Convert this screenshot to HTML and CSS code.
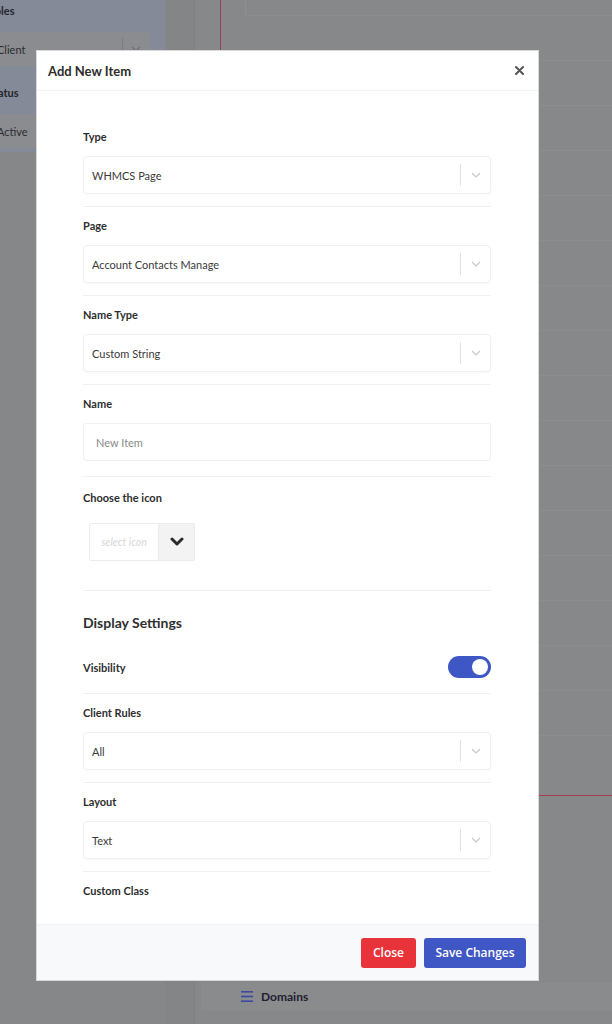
FILE: index.html
```html
<!DOCTYPE html>
<html>
<head>
<meta charset="utf-8">
<link rel="stylesheet" href="styles.css">
</head>
<body>
<div class="page">
  <aside class="sidebar">
    <div class="side-panel">
      <div class="side-label">Roles</div>
      <div class="side-select"><span class="side-text">Client</span><span class="side-ind"></span><svg class="side-chev" width="10" height="6" viewBox="0 0 10 6"><path d="M1 1l4 4 4-4" fill="none" stroke="#6f7074" stroke-width="1.2"/></svg></div>
      <div class="side-label">Status</div>
      <div class="side-select"><span class="side-text">Active</span></div>
    </div>
  </aside>
  <div class="gutter"></div>
  <main class="main">
    <div class="drop-zone">
      <div class="row row-first"></div>
      <div class="row"></div>
      <div class="row"></div>
      <div class="row"></div>
      <div class="row"></div>
      <div class="row"></div>
      <div class="row"></div>
      <div class="row"></div>
      <div class="row"></div>
      <div class="row"></div>
      <div class="row"></div>
      <div class="row"></div>
      <div class="row"></div>
      <div class="row"></div>
      <div class="row"></div>
      <div class="row"></div>
      <div class="row"></div>
    </div>
    <div class="domains">
      <svg class="ham" width="12" height="11" viewBox="0 0 12 11"><rect x="0" y="0" width="12" height="1.6" fill="#3b4aa0"/><rect x="0" y="4.7" width="12" height="1.6" fill="#3b4aa0"/><rect x="0" y="9.4" width="12" height="1.6" fill="#3b4aa0"/></svg>
      <span>Domains</span>
    </div>
  </main>
</div>

<div class="modal">
  <div class="modal-header">
    <h2 class="modal-title">Add New Item</h2>
    <svg class="modal-close" width="9" height="9" viewBox="0 0 9 9"><path d="M1 1l7 7M8 1l-7 7" stroke="#555" stroke-width="2" stroke-linecap="round"/></svg>
  </div>
  <div class="modal-body">
    <div class="field">
      <label class="label">Type</label>
      <div class="select"><span class="select-value">WHMCS Page</span><span class="select-sep"></span><span class="select-chev"><svg width="10" height="6" viewBox="0 0 10 6"><path d="M1 1l4 4 4-4" fill="none" stroke="#c8c8c8" stroke-width="1.2"/></svg></span></div>
    </div>
    <div class="field">
      <label class="label">Page</label>
      <div class="select"><span class="select-value">Account Contacts Manage</span><span class="select-sep"></span><span class="select-chev"><svg width="10" height="6" viewBox="0 0 10 6"><path d="M1 1l4 4 4-4" fill="none" stroke="#c8c8c8" stroke-width="1.2"/></svg></span></div>
    </div>
    <div class="field">
      <label class="label">Name Type</label>
      <div class="select"><span class="select-value">Custom String</span><span class="select-sep"></span><span class="select-chev"><svg width="10" height="6" viewBox="0 0 10 6"><path d="M1 1l4 4 4-4" fill="none" stroke="#c8c8c8" stroke-width="1.2"/></svg></span></div>
    </div>
    <div class="field field-name">
      <label class="label">Name</label>
      <div class="input"><span class="placeholder">New Item</span></div>
    </div>
    <div class="field field-icon">
      <label class="label label-icon">Choose the icon</label>
      <div class="icon-picker">
        <span class="icon-input">select icon</span>
        <span class="icon-btn"><svg width="14" height="10" viewBox="0 0 14 10"><path d="M2 2l5 5 5-5" fill="none" stroke="#2b2b2b" stroke-width="3" stroke-linecap="round" stroke-linejoin="round"/></svg></span>
      </div>
    </div>
    <h3 class="section-title">Display Settings</h3>
    <div class="field field-toggle">
      <label class="label">Visibility</label>
      <span class="toggle"><span class="knob"></span></span>
    </div>
    <div class="field">
      <label class="label">Client Rules</label>
      <div class="select"><span class="select-value">All</span><span class="select-sep"></span><span class="select-chev"><svg width="10" height="6" viewBox="0 0 10 6"><path d="M1 1l4 4 4-4" fill="none" stroke="#c8c8c8" stroke-width="1.2"/></svg></span></div>
    </div>
    <div class="field">
      <label class="label">Layout</label>
      <div class="select"><span class="select-value">Text</span><span class="select-sep"></span><span class="select-chev"><svg width="10" height="6" viewBox="0 0 10 6"><path d="M1 1l4 4 4-4" fill="none" stroke="#c8c8c8" stroke-width="1.2"/></svg></span></div>
    </div>
    <div class="field field-last">
      <label class="label">Custom Class</label>
    </div>
  </div>
  <div class="modal-footer">
    <button class="btn btn-close">Close</button>
    <button class="btn btn-save">Save Changes</button>
  </div>
</div>
</body>
</html>
```

FILE: styles.css
```css
* { box-sizing: border-box; }
html, body { margin: 0; padding: 0; }
body {
  width: 612px;
  height: 1024px;
  overflow: hidden;
  background: #868789;
  font-family: Lato, "Liberation Sans", sans-serif;
  color: #333;
}

/* background page (dimmed) */
.page {
  display: flex;
  height: 1024px;
}
.sidebar {
  width: 165px;
  flex: none;
  background: #868789;
}
.side-panel {
  background: #858a98;
  height: 152px;
  padding-top: 2px;
  overflow: hidden;
}
.side-label {
  font-weight: 700;
  font-size: 11px;
  color: #25262b;
  height: 18px;
  line-height: 18px;
  margin-left: -12px;
  margin-bottom: 12px;
}
.side-select {
  height: 34px;
  width: 150px;
  background: #8b8c8f;
  display: flex;
  align-items: center;
  font-size: 11px;
  color: #2c2d30;
  margin-bottom: 18px;
  position: relative;
}
.side-text { margin-left: -3px; }
.side-ind {
  position: absolute;
  left: 122px;
  top: 6px;
  width: 1px;
  height: 22px;
  background: #7b7c7f;
}
.side-chev {
  position: absolute;
  left: 131px;
  top: 14px;
}
.gutter {
  width: 30px;
  flex: none;
  background: #848587;
  border-right: 1px solid #7f8082;
}
.main {
  flex: 1;
  display: flex;
  flex-direction: column;
  background: #878889;
}
.drop-zone {
  margin-left: 25px;
  height: 796px;
  border-left: 1px solid #a23e4e;
  border-bottom: 1px solid #a23e4e;
  padding-left: 24px;
}
.row {
  height: 45px;
  border-bottom: 1px solid #8c8d8f;
}
.row-first {
  height: 16px;
  border-left: 1px solid #8f9092;
}
.domains {
  margin-top: 187px;
  margin-left: 6px;
  height: 27px;
  background: #8a8b8d;
  display: flex;
  align-items: center;
  gap: 8px;
  padding-left: 40px;
  font-weight: 700;
  font-size: 12px;
  color: #1f2030;
}

/* modal */
.modal {
  position: absolute;
  left: 36px;
  top: 50px;
  width: 503px;
  height: 931px;
  background: #fff;
  border: 1px solid #d7d8da;
  display: flex;
  flex-direction: column;
  overflow: hidden;
}
.modal-header {
  height: 40px;
  flex: none;
  display: flex;
  align-items: center;
  justify-content: space-between;
  padding: 0 14px 0 11px;
  border-bottom: 1px solid #f3f3f4;
}
.modal-title {
  margin: 0;
  font-size: 13px;
  font-weight: 700;
  color: #2d2d2d;
}
.modal-body {
  flex: 1;
  padding: 27px 47px 0 46px;
  overflow: hidden;
}
.field {
  padding: 12px 0 12px;
  border-bottom: 1px solid #f0f0f1;
}
.label {
  display: block;
  font-size: 11px;
  font-weight: 700;
  line-height: 13px;
  color: #2e2e2e;
  margin-bottom: 13px;
}
.select {
  height: 38px;
  border: 1px solid #f0f0f1;
  border-radius: 4px;
  box-shadow: 0 1px 2px rgba(0,0,0,0.03);
  display: flex;
  align-items: center;
  padding-left: 8px;
}
.select-value {
  flex: 1;
  font-size: 11px;
  color: #3a3a3a;
}
.select-sep {
  width: 1px;
  height: 22px;
  background: #e2e2e3;
}
.select-chev {
  width: 29px;
  display: flex;
  justify-content: center;
  align-items: center;
}
.field-name { padding-bottom: 15px; }
.input {
  height: 38px;
  border: 1px solid #f0f0f1;
  border-radius: 3px;
  display: flex;
  align-items: center;
  padding-left: 12px;
}
.placeholder {
  font-size: 11px;
  color: #8a8a8a;
}
.field-icon {
  padding-top: 14px;
  padding-bottom: 29px;
}
.label-icon { margin-bottom: 19px; }
.icon-picker {
  margin-left: 6px;
  display: flex;
  width: 106px;
  height: 38px;
  border: 1px solid #ececed;
  border-radius: 2px;
}
.icon-input {
  width: 69px;
  display: flex;
  align-items: center;
  justify-content: center;
  font-size: 10.5px;
  font-style: italic;
  color: #d6d6d6;
  border-right: 1px solid #ececed;
}
.icon-btn {
  flex: 1;
  background: #f3f3f3;
  display: flex;
  align-items: center;
  justify-content: center;
}
.section-title {
  margin: 23px 0 0;
  font-size: 14px;
  font-weight: 700;
  color: #2f2f2f;
  line-height: 17px;
}
.field-toggle {
  display: flex;
  justify-content: space-between;
  align-items: center;
  padding: 25px 0 15px;
}
.field-toggle .label { margin: 0; }
.toggle {
  width: 43px;
  height: 22px;
  border-radius: 11px;
  background: #3f57c4;
  position: relative;
  display: block;
}
.knob {
  position: absolute;
  right: 3px;
  top: 3px;
  width: 16px;
  height: 16px;
  border-radius: 50%;
  background: #fff;
}
.field-last { border-bottom: none; }
.modal-footer {
  height: 56px;
  flex: none;
  background: #f8f9fb;
  border-top: 1px solid #f1f2f4;
  display: flex;
  justify-content: flex-end;
  align-items: center;
  gap: 8px;
  padding-right: 12px;
}
.btn {
  height: 30px;
  border: none;
  border-radius: 3px;
  color: #fff;
  font-family: "Open Sans", "Noto Sans", sans-serif;
  font-weight: 600;
  font-size: 12px;
  padding: 0;
  white-space: nowrap;
}
.btn-close { background: #e8333b; width: 55px; }
.btn-save { background: #3f57c4; width: 102px; }
```
